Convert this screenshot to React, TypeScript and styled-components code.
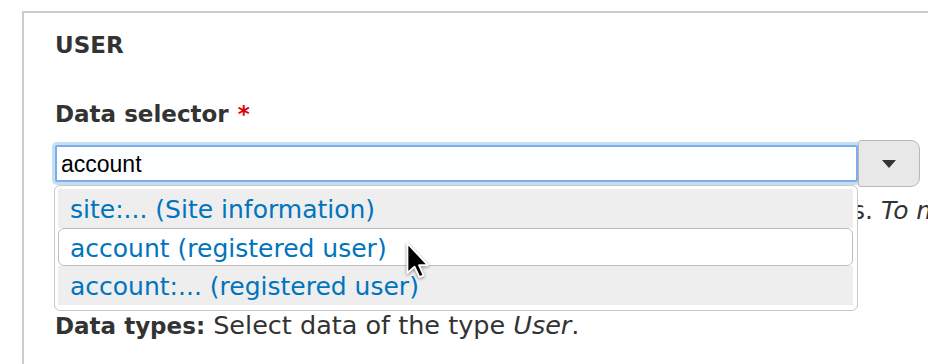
import React from "react";
import styled, { createGlobalStyle } from "styled-components";

const GlobalStyle = createGlobalStyle`
  html, body {
    margin: 0;
    padding: 0;
    background: #ffffff;
    overflow: hidden;
  }
  body {
    font-family: "DejaVu Sans", "Open Sans", sans-serif;
    color: #333333;
  }
`;

const Panel = styled.section`
  margin: 11px 0 0 22px;
  width: 1000px;
  min-height: 420px;
  border: 2px solid #cccccc;
  padding: 18px 0 0 31px;
  box-sizing: border-box;
`;

const Legend = styled.h2`
  margin: 0;
  font-size: 23px;
  line-height: 28px;
  font-weight: 700;
  color: #333333;
  text-transform: uppercase;
`;

const Label = styled.label`
  display: block;
  margin-top: 41px;
  font-size: 23px;
  line-height: 28px;
  font-weight: 700;
  color: #333333;
`;

const Required = styled.span`
  color: #e00000;
  margin-left: 9px;
`;

const InputRow = styled.div`
  position: relative;
  margin-top: 12px;
  width: 865px;
  display: flex;
  align-items: center;
`;

const TextInput = styled.input`
  flex: 1;
  height: 37px;
  box-sizing: border-box;
  margin: 0;
  padding: 2px 4px 0 4px;
  border: 2px solid #7eaee6;
  border-radius: 2px;
  box-shadow: 0 0 0 3px rgba(160, 198, 240, 0.6);
  background: #fdfeff;
  font-family: "Liberation Sans", Arial, sans-serif;
  font-size: 23px;
  color: #000000;
  outline: none;
`;

const ToggleButton = styled.button`
  position: relative;
  z-index: 1;
  width: 62px;
  height: 47px;
  margin: 0;
  padding: 0;
  box-sizing: border-box;
  border: 1px solid #b8b8b8;
  border-radius: 3px 9px 9px 3px;
  background: #e8e8e8;
  display: flex;
  align-items: center;
  justify-content: center;
`;

const Dropdown = styled.ul`
  position: absolute;
  z-index: 2;
  top: calc(100% - 2px);
  left: -1px;
  width: 804px;
  box-sizing: border-box;
  margin: 0;
  padding: 3px 4px 5px 3px;
  list-style: none;
  background: #ffffff;
  border: 1px solid #c8c8c8;
  border-radius: 6px;
`;

const Item = styled.li<{ $active?: boolean }>`
  box-sizing: border-box;
  padding: 2px 11px 0 11px;
  height: 38.5px;
  line-height: 36px;
  font-size: 25px;
  color: #0074bd;
  white-space: nowrap;
  background: ${(p) => (p.$active ? "#ffffff" : "#eeeeee")};
  border: 1px solid ${(p) => (p.$active ? "#bdbdbd" : "transparent")};
  border-radius: ${(p) => (p.$active ? "6px" : "0")};
`;

const Cursor = styled.svg`
  position: absolute;
  left: 351px;
  top: 56px;
  filter: drop-shadow(0 1px 1.5px rgba(0, 0, 0, 0.45));
`;

const Description = styled.div`
  margin-top: 9px;
  display: flex;
  font-size: 25px;
  line-height: 30px;
  color: #333333;
  white-space: nowrap;
`;

const DescriptionLead = styled.span`
  flex: 0 0 818px;
  display: flex;
  justify-content: flex-end;
  overflow: hidden;
`;

const DataTypes = styled.p`
  margin: 84px 0 0 0;
  font-size: 25.5px;
  line-height: 30px;
  color: #333333;
  white-space: nowrap;
`;

const Strong = styled.strong`
  font-size: 23px;
  font-weight: 700;
`;

const suggestions = [
  "site:... (Site information)",
  "account (registered user)",
  "account:... (registered user)",
];

export default function App() {
  return (
    <>
      <GlobalStyle />
      <Panel>
        <Legend>User</Legend>
        <Label htmlFor="data-selector">
          Data selector<Required>*</Required>
        </Label>
        <InputRow>
          <TextInput id="data-selector" defaultValue="account" readOnly />
          <ToggleButton type="button" aria-label="Show suggestions">
            <svg width="14" height="8" viewBox="0 0 14 8">
              <polygon points="0,0 14,0 7,8" fill="#333333" />
            </svg>
          </ToggleButton>
          <Dropdown>
            {suggestions.map((s, i) => (
              <Item key={s} $active={i === 1}>
                {s}
              </Item>
            ))}
            <Cursor width="24" height="38" viewBox="0 0 17 27">
              <path
                d="M1 1 L1 22 L6 17.5 L9.5 25 L12.5 23.7 L9.2 16.5 L15.5 16.5 Z"
                fill="#000000"
                stroke="#ffffff"
                strokeWidth="1.3"
                strokeLinejoin="round"
              />
            </Cursor>
          </Dropdown>
        </InputRow>
        <Description>
          <DescriptionLead>
            <span>The data selector helps you drill down into the data available to Rules.</span>
          </DescriptionLead>
          <em>&nbsp;To make entity fields appear in the data selector, you may have to use the condition 'entity has field'.</em>
        </Description>
        <DataTypes>
          <Strong>Data types:</Strong> Select data of the type <em>User</em>.
        </DataTypes>
      </Panel>
    </>
  );
}
